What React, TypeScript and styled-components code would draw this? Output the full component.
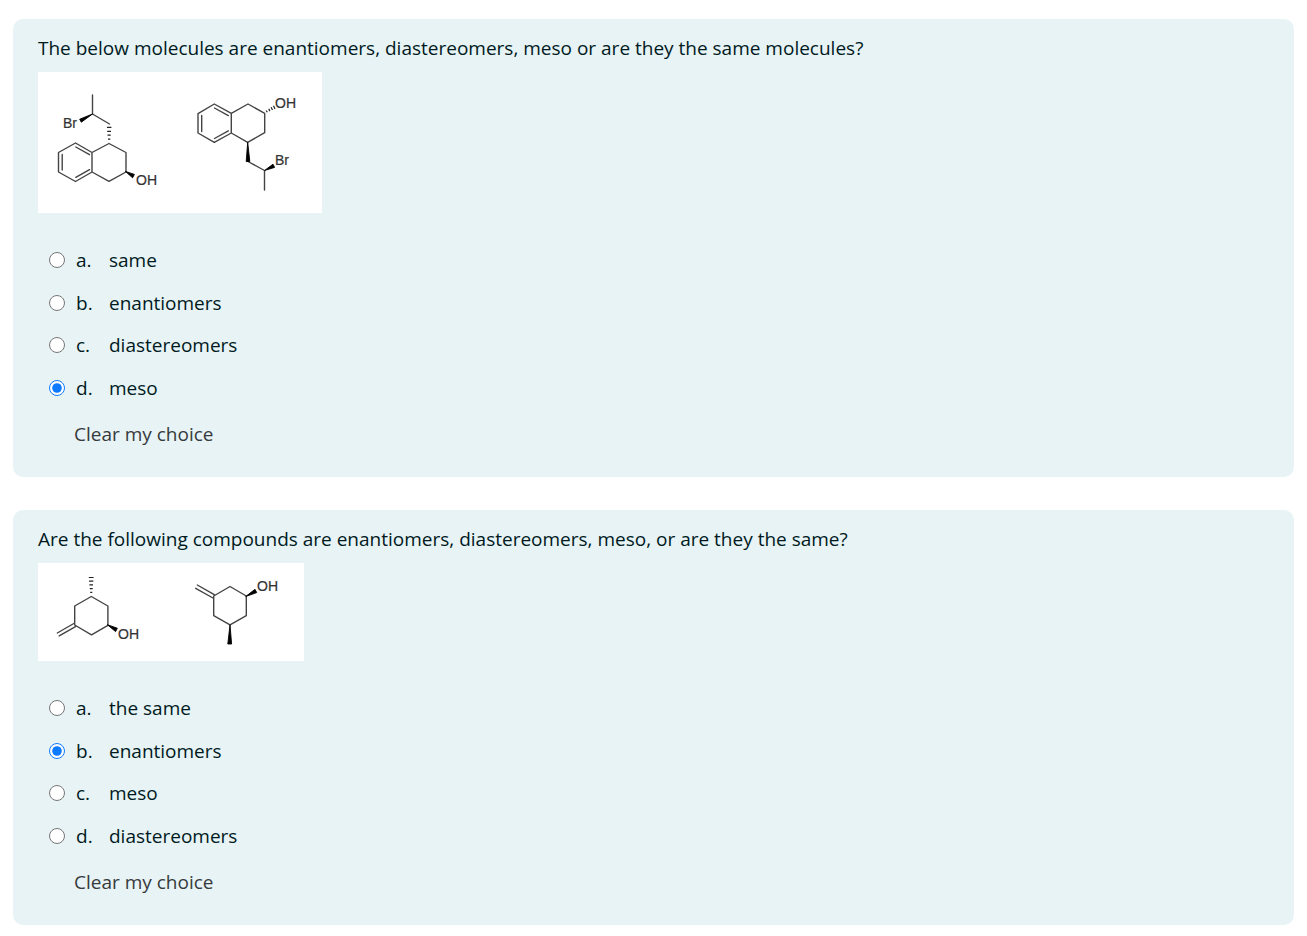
import React, { useState } from "react";
import styled, { createGlobalStyle } from "styled-components";

const GlobalStyle = createGlobalStyle`
  *, *::before, *::after { box-sizing: border-box; }
  body {
    margin: 0;
    background: #fff;
    color: #001a1e;
    font-family: "Open Sans", "Noto Sans", sans-serif;
    font-size: 19px;
    line-height: 28px;
  }
`;

const Page = styled.main`
  display: flex;
  flex-direction: column;
  gap: 33px;
  padding: 19px 13px 11px;
`;

const Card = styled.form`
  padding: 15px 25px 29px;
  border-radius: 10px;
  background: #e7f3f5;
`;

const Fieldset = styled.fieldset`
  min-width: 0;
  margin: 0;
  padding: 0;
  border: 0;
`;

const Prompt = styled.legend`
  margin: 0 0 10px;
  padding: 0;
`;

const Figure = styled.svg`
  display: block;
  max-width: 100%;
  background: #fff;
`;

const Bond = styled.path`
  fill: none;
  stroke: #444;
  stroke-width: 1.4;
  stroke-linecap: round;
  stroke-linejoin: round;
`;

const Wedge = styled.path`
  fill: #000;
  stroke: #000;
  stroke-width: 0.9;
  stroke-linejoin: round;
`;

const Hash = styled.path`
  fill: none;
  stroke: #222;
  stroke-width: 1.2;
`;

const Atom = styled.text`
  fill: #333;
  stroke: #333;
  stroke-width: 0.2;
  font-family: "Liberation Sans", Arial, sans-serif;
  font-size: 14px;
`;

const Options = styled.div`
  display: flex;
  flex-direction: column;
  justify-content: space-between;
  min-height: 156px;
  margin-top: 33px;
  padding-left: 11px;
`;

const Option = styled.label`
  display: grid;
  grid-template-columns: 16px 22px 1fr;
  column-gap: 11px;
  align-items: center;
`;

const Radio = styled.input`
  width: 16px;
  height: 16px;
  margin: 0;
  accent-color: #0d7aff;
`;

const ClearButton = styled.button`
  display: block;
  margin: 18px 0 0 36px;
  padding: 0;
  border: 0;
  background: none;
  color: #373a3c;
  font: inherit;
  cursor: pointer;
`;

function Naphthalenes() {
  return (
    <Figure width="284" height="141" viewBox="0 0 284 141" role="img" aria-label="Two bromopropyl tetrahydronaphthol molecules">
      <Bond d="M54.5 23V42L71.5 52M71 71.5L88 80.5V100L71 109.3L54 100V80.5ZM54 80.5L37.5 71L20.5 80.5V100L37.5 109.5L54 100M24.2 82.5V98M37.8 75L51.5 82.7M37.8 105.3L51.5 97.7" />
      <Wedge d="M54.5 42L41.7 47.2L43.3 50.2Z" />
      <Wedge d="M87.4 99.4L96.4 102.4L94.6 105.8Z" />
      <Hash d="M69 55.4H73.4M69.2 59.3H73M69.5 63.2H72.7M70 67.1H72.3" />
      <Atom x="25" y="56">Br</Atom>
      <Atom x="98" y="113">OH</Atom>
      <g transform="translate(142 0)">
        <Bond d="M51.3 41.3L68 32L84.7 41.3V60.7L67.7 70.3L51.3 61ZM51.3 41.3L34.3 32L18 41.7V61L34.3 70.3L51.3 61M21.7 43.5V59.5M34.5 36L48.3 43.6M34.5 66.5L48.3 58.8M68 89.5L84.5 98.5V118" />
        <Wedge d="M67.7 70.3L69.8 89.5H66.2Z" />
        <Wedge d="M84.5 98.5L93 92.2L94.6 95.4Z" />
        <Hash d="M86.3 38.4L87.2 40.2M88.7 36.8L89.9 39.1M91.1 35.3L92.5 38.1M93.5 33.8L95 36.9" />
        <Atom x="95" y="36">OH</Atom>
        <Atom x="95" y="93">Br</Atom>
      </g>
    </Figure>
  );
}

function Cyclohexanols() {
  return (
    <Figure width="266" height="98" viewBox="0 0 266 98" role="img" aria-label="Two methylidene cyclohexanol molecules">
      <Bond d="M53.3 33.5L69.9 43V62.3L53.5 71.8L36.7 62V43ZM36.7 60L19.3 70M37.5 63.6L21.2 72.9" />
      <Wedge d="M69.3 61.7L79.3 65.2L77.6 68.6Z" />
      <Hash d="M50.8 14.5H55.6M51.1 18.2H55.3M51.4 21.9H55M51.8 25.6H54.7M52.2 29.3H54.3" />
      <Atom x="80" y="76">OH</Atom>
      <g transform="translate(134 0)">
        <Bond d="M58 23.5L74.3 33V52.7L58 61.8L41.7 52.7V33ZM23.7 25.3L41 35M25.3 22L42.3 31.7" />
        <Wedge d="M73.7 33.5L83 26.3L84.7 29.6Z" />
        <Wedge d="M58 61.8L59.6 81H55.8Z" />
        <Atom x="85" y="28">OH</Atom>
      </g>
    </Figure>
  );
}

interface QuestionProps {
  name: string;
  prompt: string;
  answers: string[];
  initial: number;
  children: React.ReactNode;
}

function Question({ name, prompt, answers, initial, children }: QuestionProps) {
  const [choice, setChoice] = useState<number | null>(initial);
  return (
    <Card>
      <Fieldset>
        <Prompt>{prompt}</Prompt>
        {children}
        <Options>
          {answers.map((answer, index) => (
            <Option key={answer}>
              <Radio type="radio" name={name} checked={choice === index} onChange={() => setChoice(index)} />
              <span>{"abcd"[index]}.</span>
              <span>{answer}</span>
            </Option>
          ))}
        </Options>
      </Fieldset>
      <ClearButton type="button" onClick={() => setChoice(null)}>
        Clear my choice
      </ClearButton>
    </Card>
  );
}

export default function App() {
  return (
    <>
      <GlobalStyle />
      <Page>
        <Question
          name="naphthalenes"
          prompt="The below molecules are enantiomers, diastereomers, meso or are they the same molecules?"
          answers={["same", "enantiomers", "diastereomers", "meso"]}
          initial={3}
        >
          <Naphthalenes />
        </Question>
        <Question
          name="cyclohexanols"
          prompt="Are the following compounds are enantiomers, diastereomers, meso, or are they the same?"
          answers={["the same", "enantiomers", "meso", "diastereomers"]}
          initial={1}
        >
          <Cyclohexanols />
        </Question>
      </Page>
    </>
  );
}
